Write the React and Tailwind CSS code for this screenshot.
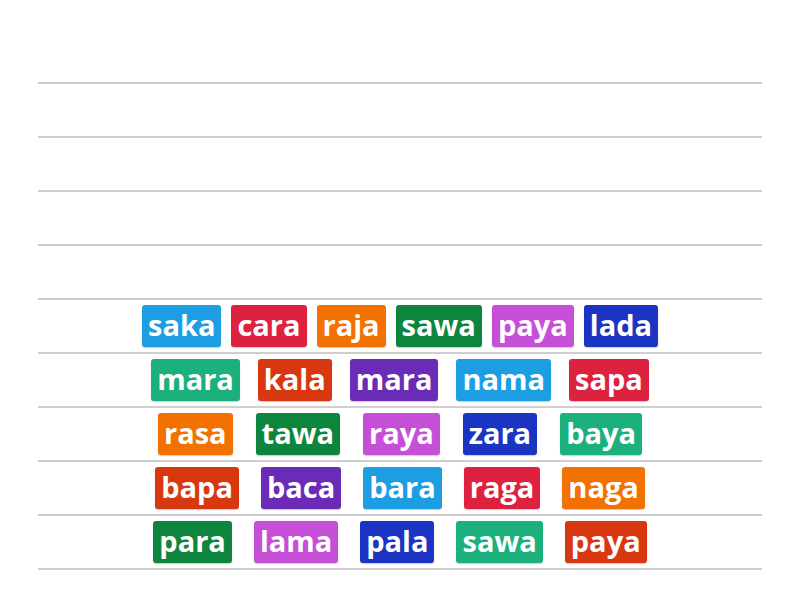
const C = {
    blue: 'bg-[#1d9de2]',
    red: 'bg-[#dd2240]',
    orange: 'bg-[#f27100]',
    green: 'bg-[#0e853e]',
    pink: 'bg-[#c64fd7]',
    navy: 'bg-[#1b34c2]',
    teal: 'bg-[#1bb07c]',
    rust: 'bg-[#d8380f]',
    violet: 'bg-[#6a2cb6]',
};

const rows = [
    {
        gap: 'gap-[10px]',
        items: [
            ['saka', C.blue],
            ['cara', C.red],
            ['raja', C.orange],
            ['sawa', C.green],
            ['paya', C.pink],
            ['lada', C.navy],
        ],
    },
    {
        gap: 'gap-[18px]',
        items: [
            ['mara', C.teal],
            ['kala', C.rust],
            ['mara', C.violet],
            ['nama', C.blue],
            ['sapa', C.red],
        ],
    },
    {
        gap: 'gap-[23px]',
        items: [
            ['rasa', C.orange],
            ['tawa', C.green],
            ['raya', C.pink],
            ['zara', C.navy],
            ['baya', C.teal],
        ],
    },
    {
        gap: 'gap-[22px]',
        items: [
            ['bapa', C.rust],
            ['baca', C.violet],
            ['bara', C.blue],
            ['raga', C.red],
            ['naga', C.orange],
        ],
    },
    {
        gap: 'gap-[22px]',
        items: [
            ['para', C.green],
            ['lama', C.pink],
            ['pala', C.navy],
            ['sawa', C.teal],
            ['paya', C.rust],
        ],
    },
];

function Tile({ word, color }) {
    return (
        <div className={`flex h-[42px] items-center rounded-[3px] px-[6px] pb-[3px] text-[29px] font-bold leading-none text-white shadow-[0_1px_1px_rgba(0,0,0,0.2)] ${color}`}>
            {word}
        </div>
    );
}

export default function App() {
    return (
        <div className="h-[600px] w-[800px] bg-white px-[38px] pt-[82px] font-['Open_Sans',sans-serif]">
            <div className="border-t-2 border-[#cfcfcf]" />
            {[0, 1, 2, 3].map((i) => (
                <div key={i} className="h-[54px] border-b-2 border-[#cfcfcf]" />
            ))}
            {rows.map((row, i) => (
                <div key={i} className={`flex h-[54px] items-center justify-center border-b-2 border-[#cfcfcf] ${row.gap}`}>
                    {row.items.map(([word, color], j) => (
                        <Tile key={j} word={word} color={color} />
                    ))}
                </div>
            ))}
        </div>
    );
}
